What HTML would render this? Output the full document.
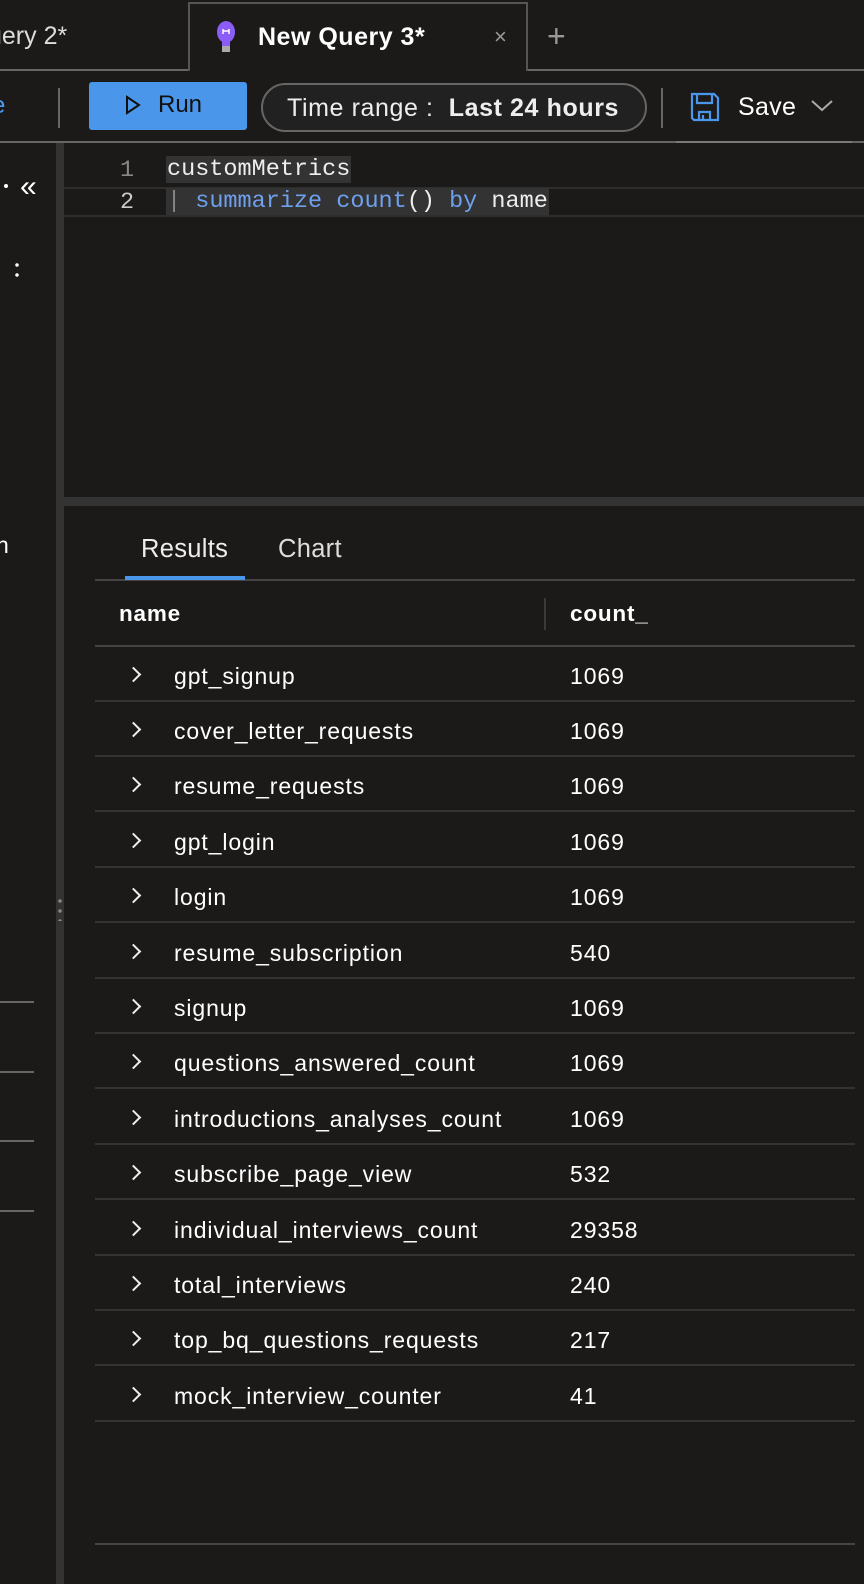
<!DOCTYPE html>
<html><head><meta charset="utf-8"><style>
*{margin:0;padding:0;box-sizing:border-box}
body{width:864px;height:1584px;background:#1b1a19;color:#fff;font-family:"Liberation Sans",sans-serif;position:relative;overflow:hidden}
.abs{position:absolute;white-space:nowrap}
.row{position:absolute;left:95px;width:760px;height:55px;border-bottom:2px solid #333}
.row .ch{position:absolute;left:33px;top:22px;width:11px;height:11px;border-right:2px solid #eee;border-top:2px solid #eee;transform:rotate(45deg)}
.row .n{position:absolute;left:79px;top:16px;font-size:23px;letter-spacing:0.9px}
.row .c{position:absolute;left:475px;top:16px;font-size:23px;letter-spacing:0.9px}
.mono{font-family:"Liberation Mono",monospace;font-size:23.5px}
</style></head><body>
<!-- tab bar -->
<div class="abs" style="left:0;top:69px;width:864px;height:2px;background:#666"></div>
<div class="abs" style="left:-12px;top:22px;font-size:25px;color:#ddd">uery 2*</div>
<div class="abs" style="left:188px;top:2px;width:340px;height:69px;border:2px solid #555;border-bottom:none;background:#1b1a19"></div>
<svg class="abs" style="left:213px;top:20px" width="26" height="34" viewBox="0 0 26 34"><ellipse cx="13" cy="12" rx="9" ry="11" fill="#8b5cf6"/><rect x="9" y="21" width="8" height="5" fill="#8b5cf6"/><rect x="9" y="26" width="8" height="6" fill="#aaa"/><path d="M10 9v5M16 9v5M10 11h6" stroke="#fff" stroke-width="1.5"/></svg>
<div class="abs" style="left:258px;top:23px;font-size:25px;font-weight:bold;letter-spacing:0.5px">New Query 3*</div>
<div class="abs" style="left:494px;top:24px;font-size:22px;color:#999">×</div>
<div class="abs" style="left:547px;top:18px;font-size:32px;color:#999;font-weight:200">+</div>
<!-- toolbar -->
<div class="abs" style="left:-8px;top:92px;font-size:24px;color:#4a9af0">e</div>
<div class="abs" style="left:58px;top:88px;width:2px;height:40px;background:#666"></div>
<div class="abs" style="left:89px;top:82px;width:158px;height:48px;background:#4a96ea;border-radius:3px"></div>
<svg class="abs" style="left:124px;top:94px" width="18" height="22"><path d="M3 3L15 11L3 19Z" fill="none" stroke="#111" stroke-width="2"/></svg>
<div class="abs" style="left:158px;top:91px;font-size:24px;color:#111">Run</div>
<div class="abs" style="left:261px;top:83px;width:386px;height:49px;border:2px solid #666;border-radius:25px;background:#212121"></div>
<div class="abs" style="left:287px;top:94px;font-size:25px;color:#eee;letter-spacing:0.6px">Time range :&nbsp; <b>Last 24 hours</b></div>
<div class="abs" style="left:661px;top:88px;width:2px;height:40px;background:#666"></div>
<svg class="abs" style="left:690px;top:92px" width="30" height="30" viewBox="0 0 30 30"><path d="M2 2H24L28 6V28H4L2 26Z" fill="none" stroke="#4a96ea" stroke-width="2.2"/><path d="M7 2V11H22V2M9 28V20H20V28M13 23V28" fill="none" stroke="#4a96ea" stroke-width="2.2"/></svg>
<div class="abs" style="left:738px;top:93px;font-size:25px;letter-spacing:0.3px">Save</div>
<svg class="abs" style="left:810px;top:98px" width="24" height="16"><path d="M2 3L12 12L22 3" fill="none" stroke="#aaa" stroke-width="2"/></svg>
<div class="abs" style="left:0;top:141px;width:864px;height:2px;background:#666"></div>
<div class="abs" style="left:676px;top:141px;width:176px;height:2px;background:#7a7a7a"></div>
<!-- sidebar -->
<div class="abs" style="left:4px;top:184px;width:4px;height:4px;background:#fff;border-radius:2px"></div>
<div class="abs" style="left:20px;top:172px;font-size:30px;line-height:30px">«</div>
<div class="abs" style="left:15px;top:260px;width:4px;height:22px;background:radial-gradient(circle,#fff 1.5px,transparent 2px) 0 0/4px 10px"></div>
<div class="abs" style="left:-4px;top:532px;font-size:23px">n</div>
<div class="abs" style="left:0;top:1001px;width:34px;height:2px;background:#666"></div>
<div class="abs" style="left:0;top:1071px;width:34px;height:2px;background:#666"></div>
<div class="abs" style="left:0;top:1140px;width:34px;height:2px;background:#666"></div>
<div class="abs" style="left:0;top:1210px;width:34px;height:2px;background:#666"></div>
<div class="abs" style="left:56px;top:143px;width:8px;height:1441px;background:#333"></div>
<div class="abs" style="left:58px;top:896px;width:4px;height:25px;background:radial-gradient(circle,#888 1.5px,transparent 2px) 0 0/4px 10px"></div>
<!-- editor -->
<div class="abs" style="left:64px;top:187px;width:800px;height:30px;border-top:2px solid #2e2e2e;border-bottom:2px solid #2e2e2e"></div>
<div class="abs mono" style="left:120px;top:157px;color:#888">1</div>
<div class="abs mono" style="left:120px;top:189px;color:#ccc">2</div>
<div class="abs mono" style="left:166px;top:156px;background:#333;padding:0 1px;color:#eee">customMetrics</div>
<div class="abs mono" style="left:166px;top:188px;background:#333;padding:0 1px;color:#eee"><span style="color:#888">|</span> <span style="color:#6ea0ee">summarize</span> <span style="color:#6ea0ee">count</span>() <span style="color:#6ea0ee">by</span> name</div>
<div class="abs" style="left:64px;top:497px;width:800px;height:9px;background:#333"></div>
<!-- results -->
<div class="abs" style="left:141px;top:535px;font-size:25.5px;color:#eee;letter-spacing:0.3px">Results</div>
<div class="abs" style="left:278px;top:535px;font-size:25.5px;color:#ddd;letter-spacing:0.3px">Chart</div>
<div class="abs" style="left:95px;top:579px;width:760px;height:2px;background:#444"></div>
<div class="abs" style="left:125px;top:576px;width:120px;height:4px;background:#4a96ea"></div>
<div class="abs" style="left:119px;top:601px;font-size:22.5px;font-weight:bold;letter-spacing:0.8px">name</div>
<div class="abs" style="left:544px;top:598px;width:2px;height:32px;background:#3a3a3a"></div>
<div class="abs" style="left:570px;top:601px;font-size:22.5px;font-weight:bold;letter-spacing:0.8px">count_</div>
<div class="abs" style="left:95px;top:645px;width:760px;height:2px;background:#444"></div>
<div class="row" style="top:647px"><i class="ch"></i><span class="n">gpt_signup</span><span class="c">1069</span></div>
<div class="row" style="top:702px"><i class="ch"></i><span class="n">cover_letter_requests</span><span class="c">1069</span></div>
<div class="row" style="top:757px"><i class="ch"></i><span class="n">resume_requests</span><span class="c">1069</span></div>
<div class="row" style="top:813px"><i class="ch"></i><span class="n">gpt_login</span><span class="c">1069</span></div>
<div class="row" style="top:868px"><i class="ch"></i><span class="n">login</span><span class="c">1069</span></div>
<div class="row" style="top:924px"><i class="ch"></i><span class="n">resume_subscription</span><span class="c">540</span></div>
<div class="row" style="top:979px"><i class="ch"></i><span class="n">signup</span><span class="c">1069</span></div>
<div class="row" style="top:1034px"><i class="ch"></i><span class="n">questions_answered_count</span><span class="c">1069</span></div>
<div class="row" style="top:1090px"><i class="ch"></i><span class="n">introductions_analyses_count</span><span class="c">1069</span></div>
<div class="row" style="top:1145px"><i class="ch"></i><span class="n">subscribe_page_view</span><span class="c">532</span></div>
<div class="row" style="top:1201px"><i class="ch"></i><span class="n">individual_interviews_count</span><span class="c">29358</span></div>
<div class="row" style="top:1256px"><i class="ch"></i><span class="n">total_interviews</span><span class="c">240</span></div>
<div class="row" style="top:1311px"><i class="ch"></i><span class="n">top_bq_questions_requests</span><span class="c">217</span></div>
<div class="row" style="top:1367px"><i class="ch"></i><span class="n">mock_interview_counter</span><span class="c">41</span></div>
<div class="abs" style="left:95px;top:1543px;width:760px;height:2px;background:#444"></div>
</body></html>
